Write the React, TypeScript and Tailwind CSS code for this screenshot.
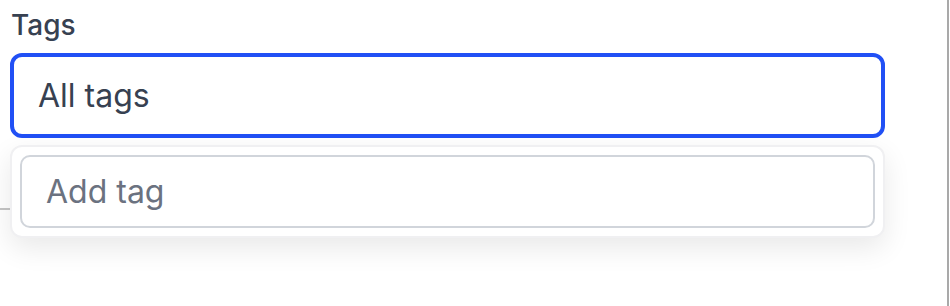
import React, { useState } from 'react';

const TagsFilter: React.FC = () => {
  const [query, setQuery] = useState('');

  return (
    <div className="relative w-[875px]">
      <button
        type="button"
        className="flex items-center w-full h-[85px] px-[24px] rounded-[12px] border-[4px] border-[#2150f5] bg-white text-left text-[32px] text-[#374151] leading-none"
      >
        All tags
      </button>

      {/* dropdown panel */}
      <div className="absolute left-0 top-full mt-[7px] z-10 w-full rounded-[12px] border-2 border-[#f0f0f2] bg-white p-[8px] shadow-[0_10px_28px_rgba(0,0,0,0.09)]">
        <input
          value={query}
          onChange={(e) => setQuery(e.target.value)}
          placeholder="Add tag"
          className="block w-full h-[73px] px-[24px] rounded-[10px] border-2 border-[#d1d5db] bg-white text-[32px] text-[#374151] placeholder:text-[#6b7280] outline-none"
        />
      </div>
    </div>
  );
};

export default function App() {
  return (
    <div
      className="flex w-[950px] h-[306px] bg-white overflow-hidden"
      style={{ fontFamily: 'Inter, "Noto Sans", sans-serif' }}
    >
      <div className="flex-1 border-r-2 border-[#a9a9a9]">
        <div className="px-[10px] pt-[5px]">
          <label className="block h-[40px] mb-[8px] text-[28px] leading-[40px] font-medium text-[#374151] pl-[1px]">
            Tags
          </label>
          <TagsFilter />
        </div>
        <div className="mt-[70px] h-[2px] w-[600px] bg-[#c4c4c4]" />
      </div>
      <div className="w-[1px]" />
    </div>
  );
}
